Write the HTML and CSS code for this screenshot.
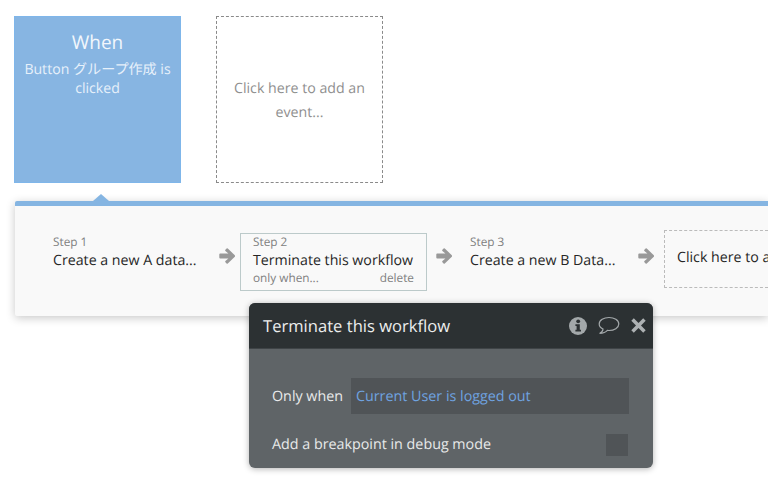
FILE: index.html
```html
<!DOCTYPE html>
<html lang="en">
<head>
<meta charset="utf-8">
<title>Workflow</title>
<link rel="stylesheet" href="styles.css">
</head>
<body>
<div class="events">
  <div class="event event-active">
    <div class="event-title">When</div>
    <div class="event-desc">Button グループ作成 is clicked</div>
  </div>
  <div class="event event-add">Click here to add an event...</div>
</div>
<div class="panel">
  <svg class="notch" width="16" height="7" viewBox="0 0 16 7"><path d="M0 7 L8 0 L16 7 Z" fill="#85b5e2"/></svg>
  <div class="steps">
    <div class="step step-first">
      <div class="step-num">Step 1</div>
      <div class="step-name">Create a new A data...</div>
    </div>
    <svg class="arrow" width="16" height="16" viewBox="0 0 16 16"><path d="M8.8 0.6 L15.8 7.3 Q16.4 8 15.8 8.7 L8.8 15.4 Q8.2 15.9 7.6 15.4 L6.4 14.2 Q5.9 13.6 6.4 13 L9.4 10.4 H1.2 Q0.3 10.4 0.3 9.5 V6.5 Q0.3 5.6 1.2 5.6 H9.4 L6.4 3 Q5.9 2.4 6.4 1.8 L7.6 0.6 Q8.2 0.1 8.8 0.6 Z" fill="#999"/></svg>
    <div class="step step-selected">
      <div class="step-num">Step 2</div>
      <div class="step-name">Terminate this workflow</div>
      <div class="step-foot"><span>only when...</span><span>delete</span></div>
    </div>
    <svg class="arrow" width="16" height="16" viewBox="0 0 16 16"><path d="M8.8 0.6 L15.8 7.3 Q16.4 8 15.8 8.7 L8.8 15.4 Q8.2 15.9 7.6 15.4 L6.4 14.2 Q5.9 13.6 6.4 13 L9.4 10.4 H1.2 Q0.3 10.4 0.3 9.5 V6.5 Q0.3 5.6 1.2 5.6 H9.4 L6.4 3 Q5.9 2.4 6.4 1.8 L7.6 0.6 Q8.2 0.1 8.8 0.6 Z" fill="#999"/></svg>
    <div class="step step-third">
      <div class="step-num">Step 3</div>
      <div class="step-name">Create a new B Data...</div>
    </div>
    <svg class="arrow" width="16" height="16" viewBox="0 0 16 16"><path d="M8.8 0.6 L15.8 7.3 Q16.4 8 15.8 8.7 L8.8 15.4 Q8.2 15.9 7.6 15.4 L6.4 14.2 Q5.9 13.6 6.4 13 L9.4 10.4 H1.2 Q0.3 10.4 0.3 9.5 V6.5 Q0.3 5.6 1.2 5.6 H9.4 L6.4 3 Q5.9 2.4 6.4 1.8 L7.6 0.6 Q8.2 0.1 8.8 0.6 Z" fill="#999"/></svg>
    <div class="step-add">Click here to add an action...</div>
  </div>
</div>
<div class="popup">
  <div class="popup-head">
    <div class="popup-title">Terminate this workflow</div>
    <svg class="icon-info" width="18" height="18" viewBox="0 0 18 18"><circle cx="9" cy="9" r="9" fill="#a3a8aa"/><circle cx="9.2" cy="4.3" r="1.9" fill="#2c3133"/><path d="M6.4 7.2 H10.8 V12.8 H12 V14.6 H6.4 V12.8 H7.6 V9 H6.4 Z" fill="#2c3133"/></svg>
    <svg class="icon-chat" width="22" height="19" viewBox="0 0 22 19"><path d="M11 1.5 C5.8 1.5 1.2 4.2 1.2 8 C1.2 10.2 2.7 12 5 13 C5 14.6 4.2 16 1.6 17.5 C5.4 17.3 8 16 9.4 14.4 C9.9 14.5 10.5 14.5 11 14.5 C16.2 14.5 20.8 11.8 20.8 8 C20.8 4.2 16.2 1.5 11 1.5 Z" fill="none" stroke="#a3a8aa" stroke-width="1.2"/></svg>
    <svg class="icon-close" width="15" height="15" viewBox="0 0 15 15"><path d="M2.8 0.3 L7.5 5 L12.2 0.3 L14.7 2.8 L10 7.5 L14.7 12.2 L12.2 14.7 L7.5 10 L2.8 14.7 L0.3 12.2 L5 7.5 L0.3 2.8 Z" fill="#adb1b3"/></svg>
  </div>
  <div class="popup-body">
    <div class="field-row">
      <div class="field-label">Only when</div>
      <div class="field-input">Current User is logged out</div>
    </div>
    <div class="check-row">
      <div class="check-label">Add a breakpoint in debug mode</div>
      <div class="checkbox"></div>
    </div>
  </div>
</div>
</body>
</html>
```
FILE: styles.css
```css
html, body {
  margin: 0;
  padding: 0;
  height: 100%;
  background: #fff;
  overflow: hidden;
  font-family: "Open Sans", "Noto Sans CJK JP", sans-serif;
  text-rendering: geometricPrecision;
}
body {
  position: relative;
}
.events {
  display: flex;
  gap: 35px;
  padding: 16px 0 0 14px;
}
.event {
  box-sizing: border-box;
  width: 167px;
  height: 167px;
  text-align: center;
}
.event-active {
  background: #87b5e2;
  border: 1px solid #7fb6ea;
  color: #f2f7fc;
  padding: 12px 6px 0;
}
.event-title {
  font-size: 19px;
  line-height: 27px;
}
.event-desc {
  font-size: 14.1px;
  line-height: 19px;
  margin-top: 4px;
  color: #e6f0fa;
}
.event-add {
  display: flex;
  align-items: center;
  justify-content: center;
  padding: 2px 14px 0;
  border: 1px dashed #8a8a8a;
  color: #8f8f8f;
  font-size: 14.2px;
  line-height: 24px;
}
.panel {
  position: relative;
  margin: 18px 0 0 15px;
  height: 115px;
  box-sizing: border-box;
  background: #f9f9f9;
  border-top: 5px solid #85b5e2;
  border-radius: 2px 0 0 2px;
  box-shadow: 0 2px 10px rgba(0, 0, 0, 0.22);
}
.notch {
  position: absolute;
  left: 78px;
  top: -12px;
  display: block;
}
.steps {
  display: flex;
  align-items: flex-start;
  padding: 27px 0 0 38px;
  white-space: nowrap;
}
.step {
  box-sizing: border-box;
  color: #222;
  flex: none;
}
.step-first { width: 166px; padding-top: 1px; }
.step-third { width: 168px; padding-top: 1px; margin-left: 18px; }
.step-num {
  font-size: 11.8px;
  line-height: 16px;
  color: #808080;
}
.step-name {
  font-size: 14.2px;
  line-height: 19px;
  margin-top: 1px;
  color: #262626;
}
.step-selected {
  width: 187px;
  height: 58px;
  margin: 0 9px 0 5px;
  padding: 0 12px;
  border: 1px solid #bccaca;
}
.step-foot {
  display: flex;
  justify-content: space-between;
  font-size: 11.8px;
  line-height: 15px;
  margin-top: 1px;
  color: #808080;
}
.arrow {
  display: block;
  margin-top: 15px;
  flex: none;
}
.step-add {
  box-sizing: border-box;
  margin: -3px 0 0 10px;
  width: 104px;
  height: 58px;
  padding: 17px 0 0 12px;
  border: 1px dashed #bbb;
  border-right: none;
  font-size: 14.2px;
  line-height: 20px;
  color: #262626;
  flex: none;
  overflow: hidden;
}
.popup {
  position: absolute;
  left: 249px;
  top: 303px;
  width: 404px;
  height: 165px;
  border-radius: 6px;
  overflow: hidden;
  background: #5f6467;
  box-shadow: 0 1px 6px rgba(0, 0, 0, 0.3);
}
.popup-head {
  display: flex;
  align-items: center;
  height: 46px;
  box-sizing: border-box;
  padding: 0 7px 0 14px;
  background: #2c3133;
  border-bottom: 1px solid #3f4447;
}
.popup-title {
  flex: 1;
  color: #eceeee;
  font-size: 16.6px;
  line-height: 22px;
}
.icon-chat { margin-left: 11px; }
.icon-close { margin-left: 11px; }
.popup-body {
  padding: 29px 24px 0 23px;
  color: #e8eaea;
  font-size: 14.3px;
}
.field-row {
  display: flex;
  align-items: center;
}
.field-label {
  width: 79px;
  padding-top: 1px;
}
.field-input {
  box-sizing: border-box;
  flex: 1;
  height: 36px;
  line-height: 37px;
  padding: 0 5px;
  background: #505457;
  color: #6fa3e0;
}
.check-row {
  display: flex;
  align-items: center;
  justify-content: space-between;
  margin-top: 20px;
}
.check-label {
  padding-bottom: 1px;
}
.checkbox {
  width: 22px;
  height: 22px;
  margin-right: 1px;
  background: #505457;
}
```
